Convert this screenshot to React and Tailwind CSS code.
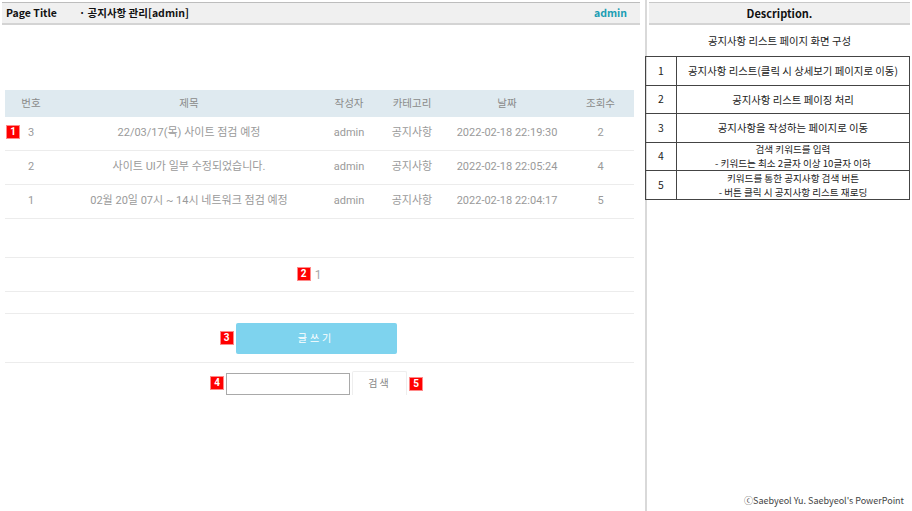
import React from "react";

const rows = [
  { no: 3, title: "22/03/17(목) 사이트 점검 예정", writer: "admin", cat: "공지사항", date: "2022-02-18 22:19:30", views: 2 },
  { no: 2, title: "사이트 UI가 일부 수정되었습니다.", writer: "admin", cat: "공지사항", date: "2022-02-18 22:05:24", views: 4 },
  { no: 1, title: "02월 20일 07시 ~ 14시 네트워크 점검 예정", writer: "admin", cat: "공지사항", date: "2022-02-18 22:04:17", views: 5 },
];

const descriptions = [
  ["공지사항 리스트(클릭 시 상세보기 페이지로 이동)"],
  ["공지사항 리스트 페이징 처리"],
  ["공지사항을 작성하는 페이지로 이동"],
  ["검색 키워드를 입력", "- 키워드는 최소 2글자 이상 10글자 이하"],
  ["키워드를 통한 공지사항 검색 버튼", "- 버튼 클릭 시 공지사항 리스트 재로딩"],
];

const cols = "grid grid-cols-[52px_264px_56px_70px_120px_67px]";

function Badge({ n, className = "" }) {
  return (
    <span
      className={`absolute w-[14px] h-[14px] bg-[#ff0000] border border-[#ff8a8a] text-white text-[10px] font-bold leading-[12px] text-center ${className}`}
    >
      {n}
    </span>
  );
}

export default function App() {
  return (
    <div className="w-[912px] h-[511px] flex bg-white font-['Roboto','Noto_Sans_CJK_KR',sans-serif] overflow-hidden">
      {/* Left: screen */}
      <div className="w-[640px] pl-[2px] pt-[2px] flex flex-col">
        <div className="h-[23px] bg-[#f0f0f0] border-t border-[#bdbdbd] border-b-2 border-b-[#d4d4d4] flex items-center px-[4px] text-[10.5px] font-bold text-[#111] font-['Noto_Sans_CJK_KR',sans-serif]">
          <span className="w-[73px]">Page Title</span>
          <span>· 공지사항 관리[admin]</span>
          <span className="ml-auto mr-[9px] text-[#1a9db3]">admin</span>
        </div>

        <div className="mt-[65px] ml-[3px] w-[629px]">
          {/* table header */}
          <div className={`${cols} h-[27px] items-center bg-[#dfeaf0] text-[10.5px] text-[#8a8a8a] text-center`}>
            <span>번호</span>
            <span>제목</span>
            <span>작성자</span>
            <span>카테고리</span>
            <span>날짜</span>
            <span>조회수</span>
          </div>

          {rows.map((r, i) => (
            <div
              key={r.no}
              className={`${cols} relative h-[34px] items-center border-b border-[#ececec] text-[11px] text-[#9a9a9a] text-center`}
            >
              {i === 0 && <Badge n="1" className="left-[1px] top-[8px]" />}
              <span>{r.no}</span>
              <span>{r.title}</span>
              <span>{r.writer}</span>
              <span>{r.cat}</span>
              <span>{r.date}</span>
              <span>{r.views}</span>
            </div>
          ))}

          <div className="h-[39px] border-b border-[#ececec]" />

          {/* pagination */}
          <div className="h-[34px] border-b border-[#ececec] flex items-center justify-center">
            <span className="relative ml-[-3px] text-[12px] text-[#a8a8a8]">
              <Badge n="2" className="right-[calc(100%+4px)] top-[1px]" />
              1
            </span>
          </div>

          <div className="h-[22px] border-b border-[#ececec]" />

          {/* write button */}
          <div className="h-[49px] border-b border-[#ececec] flex items-center justify-center">
            <div className="relative mr-[7px]">
              <Badge n="3" className="right-[calc(100%+2px)] top-[8px]" />
              <button className="w-[161px] h-[31px] rounded-[2px] bg-[#7ed3ee] text-white text-[10px] tracking-[3px]">
                글쓰기
              </button>
            </div>
          </div>

          {/* search */}
          <div className="pt-[8px] flex items-start justify-center">
            <div className="relative flex items-start ml-[-6px]">
              <Badge n="4" className="right-[calc(100%+2px)] top-[5px]" />
              <input className="mt-[2px] w-[124px] h-[22px] border border-[#a9a9a9] outline-none" />
              <button className="ml-[2px] w-[55px] h-[24px] border-t border-x border-[#eeeeee] rounded-t-[2px] text-[10px] text-[#888] tracking-[2px]">
                검색
              </button>
              <Badge n="5" className="left-[calc(100%+2px)] top-[6px]" />
            </div>
          </div>
        </div>
      </div>

      {/* Right: description */}
      <div className="ml-[5px] flex-1 border-l-2 border-[#d9d9d9] pt-[2px] flex flex-col font-['Noto_Sans_CJK_KR',sans-serif]">
        <div className="mx-[2px] h-[23px] bg-[#f0f0f0] border-t border-[#c8c8c8] border-b-2 border-b-[#d4d4d4] flex items-center justify-center text-[11px] font-bold text-[#111]">
          Description.
        </div>
        <div className="h-[31px] flex items-center justify-center text-[10.4px] text-[#222]">
          공지사항 리스트 페이지 화면 구성
        </div>
        <div className="mr-[2px] ml-[-2px] border-t-[1.5px] border-x-[1.5px] border-[#444]">
          {descriptions.map((d, i) => (
            <div key={i} className="flex h-[28.5px] border-b-[1.5px] border-[#444] text-[#222]">
              <div className="w-[31px] border-r-[1.5px] border-[#444] flex items-center justify-center text-[10.4px]">{i + 1}</div>
              <div
                className={`flex-1 flex flex-col items-center justify-center text-center ${
                  d.length > 1 ? "text-[9.6px] leading-[14px]" : "text-[10.4px] leading-[15px]"
                }`}
              >
                {d.map((t) => (
                  <span key={t}>{t}</span>
                ))}
              </div>
            </div>
          ))}
        </div>
        <div className="mt-auto mb-[4px] mr-[8px] text-right text-[9px] text-[#444]">
          ⓒSaebyeol Yu. Saebyeol's PowerPoint
        </div>
      </div>
    </div>
  );
}
